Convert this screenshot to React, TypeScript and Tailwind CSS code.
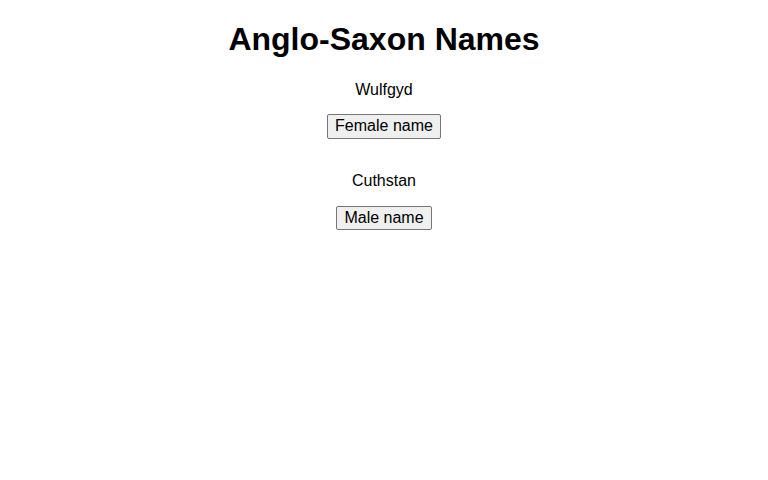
const names = [
  { name: 'Wulfgyd', label: 'Female name' },
  { name: 'Cuthstan', label: 'Male name' },
];

export default function App() {
  return (
    <div className="min-h-[480px] bg-white text-center text-black font-['Liberation_Sans',Arial,sans-serif]">
      <h1 className="pt-[21px] text-[32px] leading-[37px] font-bold">Anglo-Saxon Names</h1>

      <div className="pt-[22.5px] flex flex-col items-center gap-[33.4px]">
        {names.map((n) => (
          <div key={n.name} className="flex flex-col items-center">
            <p className="text-base leading-[18.4px]">{n.name}</p>
            <button className="mt-[15.5px] h-[24.4px] px-[7px] text-base leading-[18.4px] bg-[#efefef] border border-[#767676] rounded-[2px]">
              {n.label}
            </button>
          </div>
        ))}
      </div>
    </div>
  );
}
